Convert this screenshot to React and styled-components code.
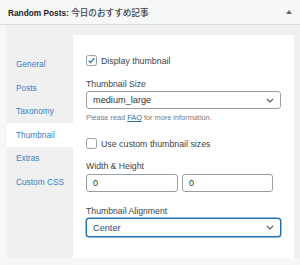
import React from 'react'
import styled, { createGlobalStyle } from 'styled-components'

const GlobalStyle = createGlobalStyle`
  html, body {
    margin: 0;
    padding: 0;
    background: #f6f7f7;
  }
  body {
    font-family: 'Liberation Sans', 'Noto Sans CJK JP', sans-serif;
    color: #1d2327;
  }
`
const Box = styled.div`
  width: 300px;
  height: 265px;
  overflow: hidden;
  background: #f6f7f7;
`
const Header = styled.div`
  height: 24px;
  display: flex;
  align-items: center;
  justify-content: space-between;
  padding: 0 8px;
  border-bottom: 1px solid #dcdcde;
  background: #f6f7f7;
`
const Title = styled.h2`
  margin: 0;
  font-size: 8.3px;
  font-weight: 700;
  color: #1d2327;
  white-space: nowrap;
`
const Jp = styled.span`
  font-family: 'Noto Sans CJK JP', sans-serif;
  font-size: 8.6px;
  font-weight: 500;
  color: #3c434a;
`
const Toggle = styled.span`
  width: 0;
  height: 0;
  border-left: 3px solid transparent;
  border-right: 3px solid transparent;
  border-bottom: 4px solid #646970;
`
const Body = styled.div`
  padding-left: 7px;
`
const Tabs = styled.div`
  display: flex;
  padding: 10px 6px 0 0;
  background: #f0f0f1;
`
const Sidebar = styled.ul`
  list-style: none;
  margin: 0;
  padding: 17.5px 0 0;
  width: 66px;
  flex-shrink: 0;
`
const Tab = styled.li`
  height: 23.5px;
  display: flex;
  align-items: center;
  padding-left: 9px;
  font-size: 8.3px;
  color: #3582c4;
  background: ${(props) => (props.active ? '#fff' : 'transparent')};
`
const Panel = styled.div`
  flex: 1;
  background: #fff;
  padding: 20px 13px 21px;
`
const CheckRow = styled.label`
  display: flex;
  align-items: center;
  gap: 4px;
  height: 11px;
  font-size: 8.8px;
  color: #3c434a;
  margin-top: ${(props) => props.mt || 0}px;
`
const CheckBox = styled.span`
  width: 9px;
  height: 9px;
  border: 1px solid #9a9ea3;
  border-radius: 2.5px;
  background: #fff;
  display: flex;
  align-items: center;
  justify-content: center;
`
const Label = styled.div`
  font-size: 8.7px;
  line-height: 11px;
  color: #3c434a;
  margin-top: ${(props) => props.mt || 0}px;
  margin-bottom: ${(props) => props.mb || 1}px;
`
const Select = styled.div`
  height: ${(props) => props.h || 18}px;
  box-sizing: border-box;
  display: flex;
  align-items: center;
  justify-content: space-between;
  padding: 0 6px;
  border: 1px solid ${(props) => (props.focus ? '#2271b1' : '#9a9ea3')};
  box-shadow: ${(props) => (props.focus ? '0 0 0 0.5px #2271b1' : 'none')};
  border-radius: 3px;
  font-size: 9.2px;
  color: ${(props) => (props.focus ? '#24527d' : '#2c3338')};
  background: #fff;
`
const Help = styled.p`
  margin: 4px 0 0;
  font-size: 7.35px;
  line-height: 10px;
  color: #787c82;

  a {
    color: #2271b1;
    text-decoration: underline;
  }
`
const Inputs = styled.div`
  display: flex;
  gap: 4px;
`
const Input = styled.div`
  width: ${(props) => props.w}px;
  height: 18px;
  box-sizing: border-box;
  display: flex;
  align-items: center;
  padding-left: 6px;
  border: 1px solid #9a9ea3;
  border-radius: 3px;
  font-size: 9px;
  color: #2c3338;
`

const Check = () => (
  <svg width='9' height='9' viewBox='0 0 9 9'>
    <path d='M1.6 4.6 L3.6 6.6 L7.4 2.2' fill='none' stroke='#2271b1' strokeWidth='1.3' />
  </svg>
)
const Chevron = () => (
  <svg width='8' height='5' viewBox='0 0 8 5'>
    <path d='M1 1 L4 4 L7 1' fill='none' stroke='#50575e' strokeWidth='1.1' />
  </svg>
)

export default function App() {
  const tabs = ['General', 'Posts', 'Taxonomy', 'Thumbnail', 'Extras', 'Custom CSS']
  return (
    <Box>
      <GlobalStyle />
      <Header>
        <Title>
          Random Posts: <Jp>今日のおすすめ記事</Jp>
        </Title>
        <Toggle />
      </Header>
      <Body>
        <Tabs>
          <Sidebar>
            {tabs.map((t) => (
              <Tab key={t} active={t === 'Thumbnail'}>
                {t}
              </Tab>
            ))}
          </Sidebar>
          <Panel>
            <CheckRow>
              <CheckBox>
                <Check />
              </CheckBox>
              Display thumbnail
            </CheckRow>
            <Label mt={13}>Thumbnail Size</Label>
            <Select>
              medium_large
              <Chevron />
            </Select>
            <Help>
              Please read <a>FAQ</a> for more information.
            </Help>
            <CheckRow mt={15}>
              <CheckBox />
              Use custom thumbnail sizes
            </CheckRow>
            <Label mt={12} mb={2}>
              Width &amp; Height
            </Label>
            <Inputs>
              <Input w={92}>0</Input>
              <Input w={91}>0</Input>
            </Inputs>
            <Label mt={14}>Thumbnail Alignment</Label>
            <Select focus h={19}>
              Center
              <Chevron />
            </Select>
          </Panel>
        </Tabs>
      </Body>
    </Box>
  )
}
